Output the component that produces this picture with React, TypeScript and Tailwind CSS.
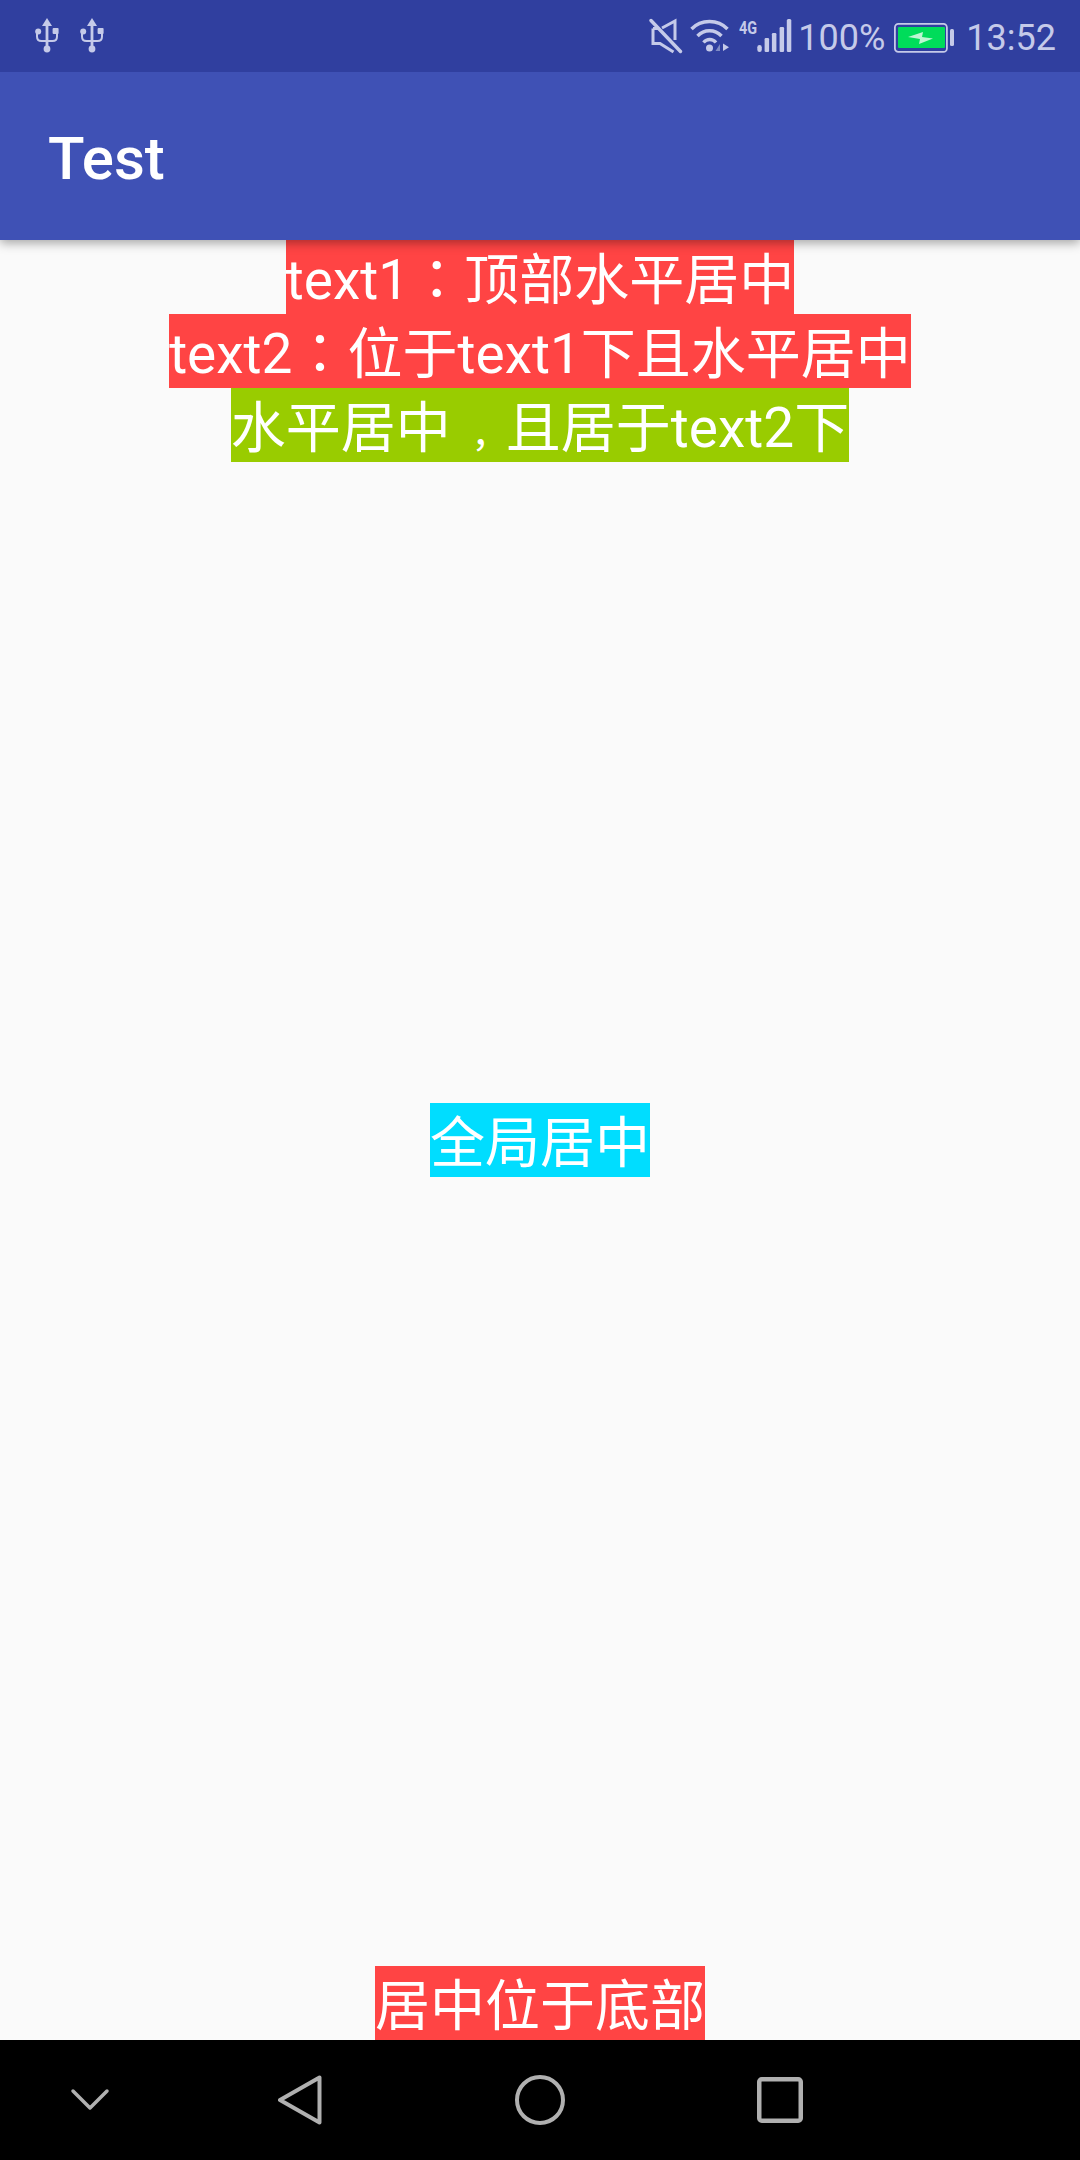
const Usb = () => (
  <svg width="24" height="36" viewBox="0 0 24 36" fill="#c5cae9">
    <path d="M12 0l5 8h-3.6v22h-2.8V8H7z" />
    <circle cx="12" cy="31" r="3.4" />
    <circle cx="3.2" cy="13.4" r="3" />
    <rect x="17.6" y="10" width="6" height="6" rx="1" />
    <path d="M2 15v3.5c0 3 2 4.500 4.500 4.500H17.500c2.500 0 4.500-1.500 4.500-4.500V15" fill="none" stroke="#c5cae9" strokeWidth="2" />
  </svg>
);

const StatusIcons = () => (
  <>
    {/* muted speaker */}
    <svg width="34" height="36" viewBox="0 0 34 36" fill="none" stroke="#c5cae9" strokeWidth="3" className="mr-[7px]">
      <path d="M2 2.500l29.500 31" strokeLinecap="round" strokeWidth="3.400" />
      <path d="M4 10.500v15h7l13.500 8.500M10 10.500H4M13 10l13-7v19" />
    </svg>
    {/* wifi */}
    <svg width="40" height="36" viewBox="0 0 40 36" fill="none" stroke="#c5cae9" strokeWidth="3.400" className="mr-[9px]">
      <path d="M1.500 11C11 1 28 1 37.500 11" />
      <path d="M7.500 18c6.500-7 17.500-7 24 0" />
      <path d="M13.500 24.500c3.500-4 9-4 12.500 0" />
      <circle cx="19.500" cy="30" r="3.500" fill="#c5cae9" stroke="none" />
      <path d="M25.500 33l4.500-7v7z" fill="#7f8bc4" stroke="none" />
      <path d="M33 25.500l6 3.800-6 3.700z" fill="#c5cae9" stroke="none" />
    </svg>
    {/* 4G + signal */}
    <div className="relative w-[54px] h-[36px] mr-[5px]">
      <span className="absolute left-0 top-0 text-[18px] leading-[20px] font-bold text-[#c5cae9] scale-x-[0.8] origin-left">4G</span>
      <svg width="36" height="36" viewBox="0 0 36 36" fill="#c5cae9" className="absolute left-[18px] top-0">
        <rect x="0.300" y="27" width="4.500" height="7" rx="2.250" />
        <rect x="7.600" y="20" width="4.500" height="14" rx="1.200" />
        <rect x="14.900" y="15" width="4.500" height="19" rx="1.200" />
        <rect x="22.600" y="9" width="4.500" height="25" rx="1.200" />
        <rect x="29.800" y="1" width="4.500" height="33" rx="1.500" />
      </svg>
    </div>
    <span className="text-[36px] leading-[36px] text-[#c5cae9] mt-[4px] mr-[9px]">100%</span>
    {/* battery */}
    <svg width="60" height="36" viewBox="0 0 60 36" className="mr-[12px]">
      <rect x="0.900" y="5.900" width="52" height="28" rx="3.500" fill="none" stroke="#c5cae9" strokeWidth="1.800" />
      <rect x="4" y="9" width="47" height="21" rx="1" fill="#00dc5a" />
      <rect x="56" y="11" width="4" height="17" rx="1.500" fill="#c5cae9" />
      <path d="M14 19l15-5-1 5 11 1.500-14 5.500 1-5z" fill="#bdf6d3" />
    </svg>
    <span className="text-[36px] leading-[36px] text-[#c5cae9] mt-[4px]">13:52</span>
  </>
);

// centred full-width colon, traditional style
const Colon = () => (
  <span lang="zh-TW" className="font-['Noto_Sans_CJK_TC'] leading-[0]">：</span>
);

export default function App() {
  return (
    <div className="w-[1080px] h-[2160px] flex flex-col bg-[#fafafa] font-[Roboto,'Noto_Sans_CJK_SC',sans-serif]" lang="zh-CN">
      <div className="relative z-10 shadow-[0_3px_10px_rgba(0,0,0,0.35)]">
        <div className="h-[72px] bg-[#303f9f] flex items-center pl-[35px] pr-[24px]">
          <div className="flex gap-[21px]">
            <Usb />
            <Usb />
          </div>
          <div className="ml-auto flex items-center">
            <StatusIcons />
          </div>
        </div>
        <div className="h-[168px] bg-[#3f51b5] flex items-center pl-[48px] pt-[6px]">
          <span className="text-[60px] font-medium text-white">Test</span>
        </div>
      </div>

      <div className="flex-1 grid grid-rows-[1fr_auto_1fr] justify-items-center text-white text-[55px] leading-[68px]">
        <div className="flex flex-col items-center">
          <div className="bg-[#ff4444] pt-[6px]">text1<Colon />顶部水平居中</div>
          <div className="bg-[#ff4444] pt-[6px]">text2<Colon />位于text1下且水平居中</div>
          <div className="bg-[#99cc00] pt-[6px]">水平居中<span className="ml-[21px] text-[34px] leading-[0] font-medium">，</span>且居于text2下</div>
        </div>
        <div className="bg-[#00ddff] pt-[6px]">全局居中</div>
        <div className="self-end bg-[#ff4444] pt-[6px]">居中位于底部</div>
      </div>

      <div className="h-[120px] bg-black grid grid-cols-[180px_240px_240px_240px] items-center justify-items-center">
        <svg width="40" height="24" viewBox="0 0 40 24" fill="none" stroke="#b0b0b0" strokeWidth="3.500" strokeLinecap="round" strokeLinejoin="round">
          <path d="M3 3l17 17L37 3" />
        </svg>
        <svg width="44" height="50" viewBox="0 0 44 50" fill="none" stroke="#b0b0b0" strokeWidth="4" strokeLinejoin="round">
          <path d="M41.500 2.500v45L2 25z" />
        </svg>
        <svg width="52" height="52" viewBox="0 0 52 52" fill="none" stroke="#b0b0b0" strokeWidth="4">
          <circle cx="26" cy="26" r="23" />
        </svg>
        <svg width="46" height="46" viewBox="0 0 46 46" fill="none" stroke="#b0b0b0" strokeWidth="4.500" strokeLinejoin="round">
          <rect x="2.250" y="2.250" width="41.500" height="41.500" rx="2.500" />
        </svg>
      </div>
    </div>
  );
}
